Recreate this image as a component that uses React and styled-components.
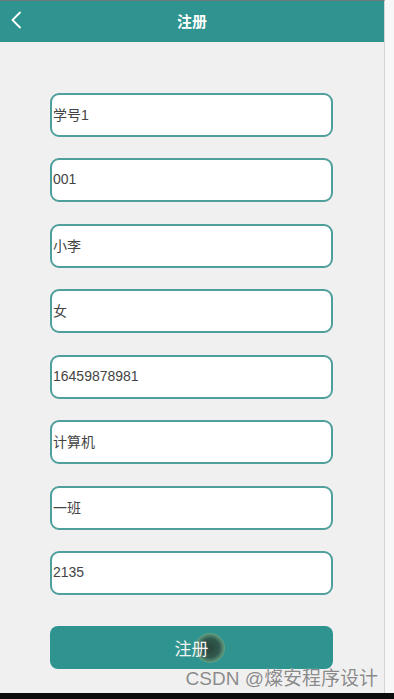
import React from "react";
import styled, { createGlobalStyle } from "styled-components";

const GlobalStyle = createGlobalStyle`
  html, body {
    margin: 0;
    padding: 0;
    background: #000;
  }
  * {
    box-sizing: border-box;
  }
`;

const Frame = styled.div`
  width: 394px;
  height: 699px;
  display: flex;
  flex-direction: column;
  overflow: hidden;
  font-family: "Liberation Sans", Arial, "Noto Sans CJK SC", sans-serif;
`;

const Window = styled.div`
  height: 693px;
  display: flex;
  background: #f6f6f6;
`;

const Screen = styled.div`
  position: relative;
  width: 385px;
  display: flex;
  flex-direction: column;
  background: #f0f0f0;
  border-right: 1px solid #d4d4d4;
  border-top: 1px solid #6b7a79;
`;

const Header = styled.header`
  height: 41px;
  display: grid;
  grid-template-columns: 40px 1fr 40px;
  align-items: center;
  background: #2f9490;
  color: #fff;
`;

const BackButton = styled.button`
  border: 0;
  background: none;
  padding: 0 0 4px 10px;
  display: flex;
  align-items: center;
  color: #fff;
  cursor: pointer;
`;

const Title = styled.h1`
  margin: 0 0 3px;
  text-align: center;
  font-size: 15px;
  font-weight: bold;
  letter-spacing: 0;
`;

const Form = styled.form`
  display: flex;
  flex-direction: column;
  gap: 21.43px;
  padding: 51px 51px 0 50px;
`;

const Field = styled.input`
  height: 44px;
  width: 283px;
  padding: 0 0 2px 1px;
  border: 2px solid #4f9f9c;
  border-radius: 9px;
  background: #fff;
  font-family: inherit;
  font-size: 14px;
  color: #444;
  outline: none;
`;

const Submit = styled.button`
  position: relative;
  margin-top: 10px;
  height: 43px;
  width: 283px;
  border: 0;
  border-radius: 8px;
  background: #2f9490;
  color: #f4f4f4;
  font-family: inherit;
  font-size: 17px;
  padding-bottom: 2px;
`;

const ClickMark = styled.span`
  position: absolute;
  left: 145px;
  top: 7px;
  width: 30px;
  height: 30px;
  border-radius: 50%;
  background: radial-gradient(circle, rgba(40, 60, 50, 0.9) 0%, rgba(50, 70, 55, 0.75) 45%, rgba(140, 170, 120, 0.55) 70%, rgba(47, 148, 144, 0) 100%);
  pointer-events: none;
`;

const ButtonLabel = styled.span`
  position: relative;
`;

const Watermark = styled.div`
  position: absolute;
  right: 6px;
  bottom: 3px;
  font-size: 19px;
  color: #8a8a8a;
  text-shadow: 0 0 1px #fff;
  white-space: nowrap;
`;

const SideStrip = styled.div`
  flex: 1;
  background: #f7f7f7;
`;

const BottomBar = styled.div`
  flex: 1;
  background: #0b0b0b;
`;

const values = ["学号1", "001", "小李", "女", "16459878981", "计算机", "一班", "2135"];

export default function App() {
  return (
    <>
      <GlobalStyle />
      <Frame>
        <Window>
          <Screen>
            <Header>
              <BackButton type="button" aria-label="返回">
                <svg width="12" height="18" viewBox="0 0 12 18" fill="none">
                  <path d="M10 1.5L2.5 9L10 16.5" stroke="#fff" strokeWidth="1.8" strokeLinecap="round" strokeLinejoin="round" />
                </svg>
              </BackButton>
              <Title>注册</Title>
              <span />
            </Header>
            <Form onSubmit={e => e.preventDefault()}>
              {values.map((v, i) => (
                <Field key={i} defaultValue={v} />
              ))}
              <Submit type="submit">
                <ClickMark />
                <ButtonLabel>注册</ButtonLabel>
              </Submit>
            </Form>
            <Watermark>CSDN @燦安程序设计</Watermark>
          </Screen>
          <SideStrip />
        </Window>
        <BottomBar />
      </Frame>
    </>
  );
}
